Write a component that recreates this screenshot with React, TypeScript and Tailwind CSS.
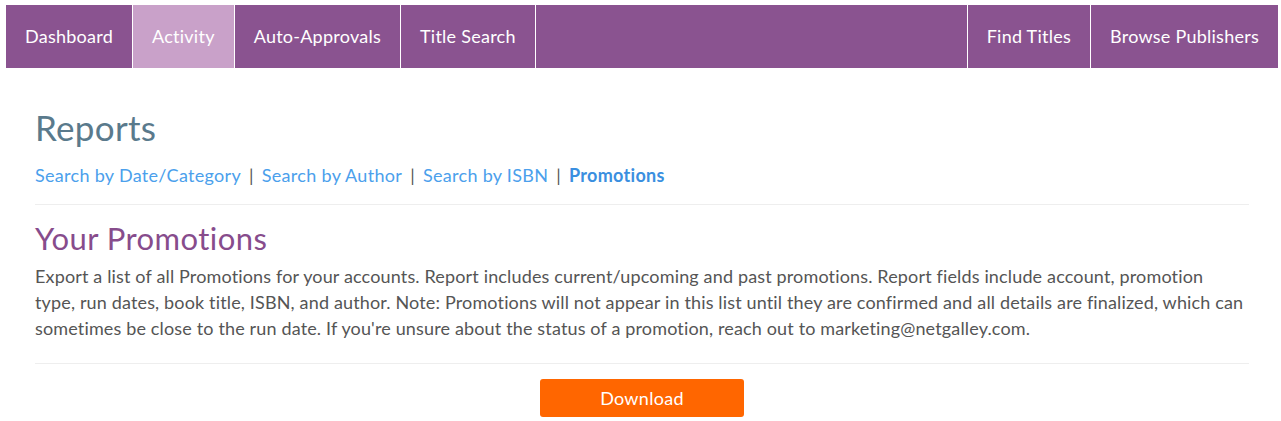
import React from "react";

const font = { fontFamily: "Lato, 'Open Sans', sans-serif" };

export default function App() {
  const left = ["Dashboard", "Activity", "Auto-Approvals", "Title Search"];
  const right = ["Find Titles", "Browse Publishers"];
  return (
    <div className="w-[1281px] h-[421px] bg-white overflow-hidden" style={font}>
      <div className="pt-[5px] pl-[6px] pr-[3px]">
        <nav className="flex h-[63px] bg-[#8a5390] text-white text-[18px] tracking-[0.25px]">
          {left.map((l) => (
            <div
              key={l}
              className={`flex items-center px-[19px] border-r border-white ${
                l === "Activity" ? "bg-[#c9a1c9]" : ""
              }`}
            >
              {l}
            </div>
          ))}
          <div className="flex-1 border-r border-white" />
          {right.map((l, i) => (
            <div
              key={l}
              className={`flex items-center px-[19px] ${i === 0 ? "border-r border-white" : ""}`}
            >
              {l}
            </div>
          ))}
        </nav>
      </div>
      <div className="pl-[35px] pr-[32px]">
        <h1 className="mt-[39px] text-[35px] leading-[40px] text-[#5a7a8c] tracking-[0.3px]">
          Reports
        </h1>
        <div className="mt-[16px] text-[18px] leading-[24px] flex items-center text-[#4ba0ec] tracking-[0.3px]">
          <span>Search by Date/Category</span>
          <span className="ml-[8px] mr-[8px] text-[#555]">|</span>
          <span>Search by Author</span>
          <span className="ml-[8px] mr-[8px] text-[#555]">|</span>
          <span>Search by ISBN</span>
          <span className="ml-[8px] mr-[8px] text-[#555]">|</span>
          <span className="font-bold text-[#3a8fe0]">Promotions</span>
        </div>
        <div className="mt-[17px] border-t border-[#eeeeee]" />
        <h2 className="mt-[15px] text-[31px] leading-[36px] text-[#874c8c] tracking-[0.45px]">
          Your Promotions
        </h2>
        <p className="mt-[7px] text-[18px] leading-[26px] text-[#555555] tracking-[0.15px]">
          Export a list of all Promotions for your accounts. Report includes current/upcoming and past
          promotions. Report fields include account, promotion
          <br />
          type, run dates, book title, ISBN, and author. Note: Promotions will not appear in this list
          until they are confirmed and all details are finalized, which can
          <br />
          sometimes be close to the run date. If you're unsure about the status of a promotion, reach
          out to marketing@netgalley.com.
        </p>
        <div className="mt-[22px] border-t border-[#eeeeee]" />
        <div className="flex justify-center mt-[15px]">
          <button className="w-[204px] h-[38px] rounded-[3px] bg-[#ff6600] text-white text-[18px] tracking-[0.3px]">
            Download
          </button>
        </div>
      </div>
    </div>
  );
}
